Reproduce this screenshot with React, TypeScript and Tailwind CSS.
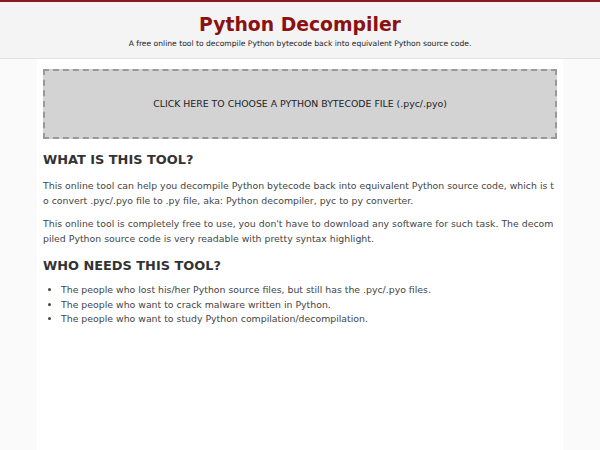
import React from "react";

const App: React.FC = () => {
  return (
    <div
      className="min-h-[450px] bg-[#fafafa] text-[#333]"
      style={{ fontFamily: '"DejaVu Sans", Verdana, sans-serif' }}
    >
      <div className="border-t-2 border-[#8b1a1a] bg-[#f4f4f4] border-b border-b-[#e2e2e2] h-[59px] flex flex-col items-center pt-[11px]">
        <h1 className="text-[18.8px] leading-[24px] font-bold text-[#8b1111]">Python Decompiler</h1>
        <p className="text-[7.6px] leading-[10px] mt-[2px] text-[#222]">
          A free online tool to decompile Python bytecode back into equivalent Python source code.
        </p>
      </div>
      <div className="mx-[37px] bg-white min-h-[391px] px-[6px] pt-[10px]">
        <div className="h-[70px] bg-[#d3d3d3] border-2 border-dashed border-[#999] flex items-center justify-center text-[9.35px] text-[#222]">
          CLICK HERE TO CHOOSE A PYTHON BYTECODE FILE (.pyc/.pyo)
        </div>
        <h2 className="mt-[13px] text-[12.9px] leading-[16px] font-bold text-[#333]">WHAT IS THIS TOOL?</h2>
        <p className="mt-[11px] text-[9.35px] leading-[14.5px] break-all text-[#444]">
          This online tool can help you decompile Python bytecode back into equivalent Python source code, which is to convert .pyc/.pyo file to .py file, aka: Python decompiler, pyc to py converter.
        </p>
        <p className="mt-[9px] text-[9.35px] leading-[14.5px] break-all text-[#444]">
          This online tool is completely free to use, you don't have to download any software for such task. The decompiled Python source code is very readable with pretty syntax highlight.
        </p>
        <h2 className="mt-[12px] text-[12.9px] leading-[16px] font-bold text-[#333]">WHO NEEDS THIS TOOL?</h2>
        <ul className="mt-[9px] list-disc pl-[18px] text-[9.35px] leading-[14.5px] text-[#444]">
          <li>The people who lost his/her Python source files, but still has the .pyc/.pyo files.</li>
          <li>The people who want to crack malware written in Python.</li>
          <li>The people who want to study Python compilation/decompilation.</li>
        </ul>
      </div>
    </div>
  );
};

export default App;
